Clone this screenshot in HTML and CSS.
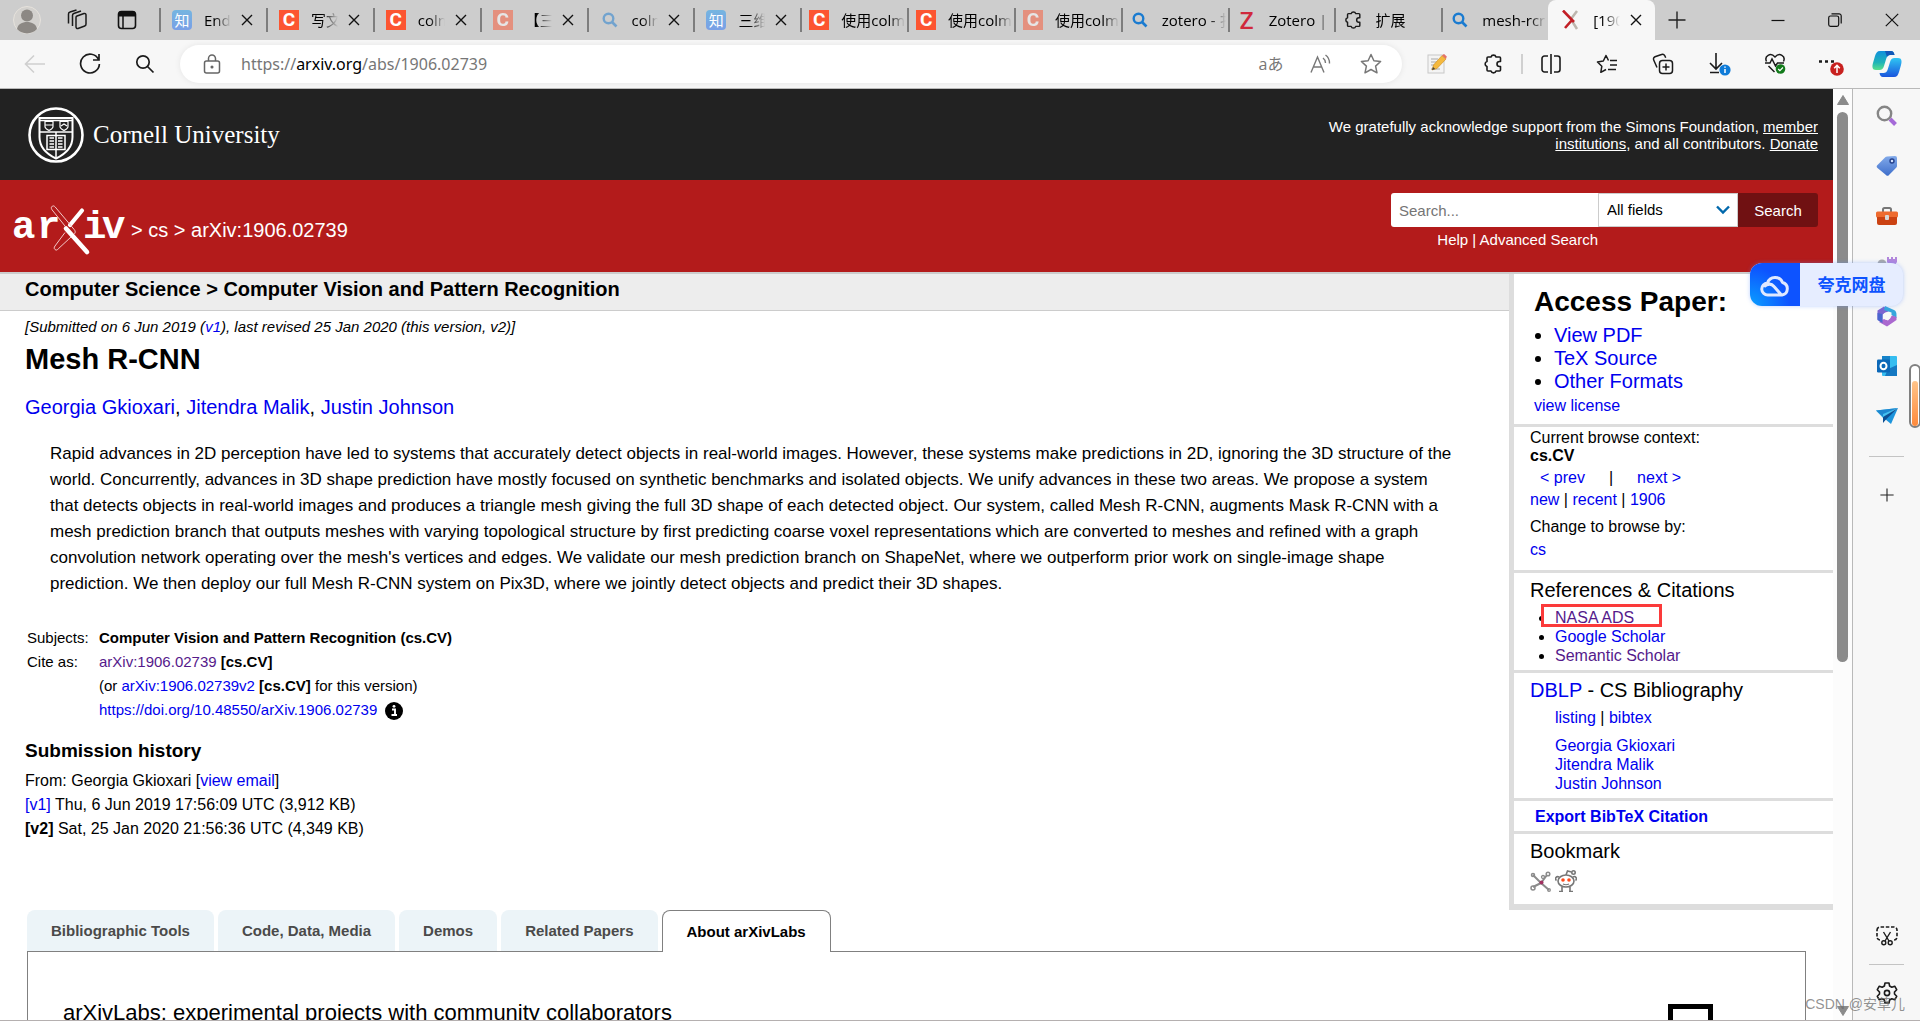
FILE: index.html
```html
<!DOCTYPE html>
<html lang="en">
  <head>
    <meta charset="UTF-8" />
    <meta name="viewport" content="width=device-width, initial-scale=1.0" />
    <title>[1906.02739] Mesh R-CNN</title>
    <link rel="stylesheet" href="styles.css">
  </head>
  <body>
    <!-- shared icons -->
    <svg class="defs" aria-hidden="true">
      <symbol id="i-close" viewBox="0 0 12 12"><path d="M1 1l10 10M11 1L1 11" stroke="#111" stroke-width="1.4" /></symbol>
      <symbol id="i-find" viewBox="0 0 20 20"><circle cx="8.5" cy="8.5" r="4.8" fill="none" stroke="#1a7bd0" stroke-width="2.4" /><path d="M12 12l4.5 4.5" stroke="#1a7bd0" stroke-width="2.6" /></symbol>
      <symbol id="i-ext" viewBox="0 0 22 22"><path d="M6 4h3a2.6 2.6 0 0 1 5 0h3.500a1 1 0 0 1 1 1v3.500h-1a2.500 2.500 0 0 0 0 5h1V17a1 1 0 0 1-1 1H14a2.600 2.600 0 0 1-5 0H6a1 1 0 0 1-1-1v-3.500a2.600 2.600 0 0 1 0-5V5a1 1 0 0 1 1-1z" fill="none" stroke="#1b1b1b" stroke-width="1.6" stroke-linejoin="round" /></symbol>
      <symbol id="i-plus" viewBox="0 0 18 18"><path d="M9 0.500v17M0.500 9h17" stroke="#222" stroke-width="1.4" /></symbol>
    </svg>

    <!-- Tab strip -->
    <div class="tabstrip">
      <div class="strip-left">
        <button class="strip-btn" aria-label="Profile">
          <svg width="28" height="28" viewBox="0 0 28 28"><circle cx="14" cy="14" r="13.500" fill="#d3d1ce" stroke="#e6e2dc" /><circle cx="14" cy="9.500" r="6" fill="#8c8884" /><path d="M4 23c1-5 5-7 10-7s9 2 10 7a13.500 13.500 0 0 1-20 0z" fill="#8c8884" /></svg>
        </button>
        <button class="strip-btn" aria-label="Workspaces">
          <svg width="24" height="22" viewBox="0 0 24 22" fill="none" stroke="#1b1b1b" stroke-width="1.500" stroke-linejoin="round"><path d="M12 7l7-2.500a1.500 1.500 0 0 1 2 1.300V15a2 2 0 0 1-1.300 2L13 19.500a1.500 1.500 0 0 1-2-1.400V8.500A1.600 1.600 0 0 1 12 7zM7.500 17V6.500a2 2 0 0 1 1.300-2L16 2M3.500 14.500V5A2 2 0 0 1 5 3l6.500-2" /></svg>
        </button>
        <button class="strip-btn" aria-label="Tab actions">
          <svg width="20" height="20" viewBox="0 0 20 20"><rect x="1.500" y="1.500" width="17" height="17" rx="3" fill="none" stroke="#111" stroke-width="1.600" /><path d="M1.500 6.500V4a3 3 0 0 1 3-3h11a3 3 0 0 1 3 3v2.500z" fill="#111" /><path d="M6 6v12" stroke="#111" stroke-width="1.500" /></svg>
        </button>
      </div>
      <div class="tabs">
        <div class="tab"><span class="fav zhihu">知</span><span class="tab-title">End</span><button class="tab-x" aria-label="Close"><svg width="12" height="12"><use href="#i-close" /></svg></button></div>
        <div class="tab"><span class="fav csdn">C</span><span class="tab-title">写文</span><button class="tab-x" aria-label="Close"><svg width="12" height="12"><use href="#i-close" /></svg></button></div>
        <div class="tab"><span class="fav csdn">C</span><span class="tab-title">coln</span><button class="tab-x" aria-label="Close"><svg width="12" height="12"><use href="#i-close" /></svg></button></div>
        <div class="tab"><span class="fav csdn asleep">C</span><span class="tab-title">【三</span><button class="tab-x" aria-label="Close"><svg width="12" height="12"><use href="#i-close" /></svg></button></div>
        <div class="tab"><svg class="fav asleep" viewBox="0 0 20 20"><use href="#i-find" /></svg><span class="tab-title">coln</span><button class="tab-x" aria-label="Close"><svg width="12" height="12"><use href="#i-close" /></svg></button></div>
        <div class="tab"><span class="fav zhihu">知</span><span class="tab-title">三维</span><button class="tab-x" aria-label="Close"><svg width="12" height="12"><use href="#i-close" /></svg></button></div>
        <div class="tab wide"><span class="fav csdn">C</span><span class="tab-title">使用colm</span></div>
        <div class="tab wide"><span class="fav csdn">C</span><span class="tab-title">使用colm</span></div>
        <div class="tab wide"><span class="fav csdn asleep">C</span><span class="tab-title">使用colm</span></div>
        <div class="tab wide"><svg class="fav" viewBox="0 0 20 20"><use href="#i-find" /></svg><span class="tab-title">zotero - 扌</span></div>
        <div class="tab wide"><span class="fav zot">Z</span><span class="tab-title">Zotero |</span></div>
        <div class="tab wide"><svg class="fav" viewBox="0 0 22 22"><use href="#i-ext" /></svg><span class="tab-title">扩展</span></div>
        <div class="tab wide"><svg class="fav" viewBox="0 0 20 20"><use href="#i-find" /></svg><span class="tab-title">mesh-rcr</span></div>
        <div class="tab active"><svg class="fav" viewBox="0 0 20 20"><path d="M16 1L10 9M11 11l5 8" stroke="#bdb6ae" stroke-width="2.500" /><path d="M2 0.500L13 12M4 18l7-8" stroke="#c21f26" stroke-width="2.600" /></svg><span class="tab-title">[190</span><button class="tab-x" aria-label="Close"><svg width="12" height="12"><use href="#i-close" /></svg></button></div>
      </div>
      <button class="new-tab" aria-label="New tab"><svg width="18" height="18"><use href="#i-plus" /></svg></button>
      <div class="win-btns">
        <button aria-label="Minimize"><svg width="14" height="14" viewBox="0 0 14 14"><path d="M0.500 7.500h13" stroke="#111" stroke-width="1.200" /></svg></button>
        <button aria-label="Restore"><svg width="14" height="14" viewBox="0 0 14 14" fill="none" stroke="#111" stroke-width="1.200"><rect x="0.700" y="3" width="10" height="10.300" rx="1.800" /><path d="M3.500 0.800H11a2.200 2.200 0 0 1 2.200 2.200v7.500" /></svg></button>
        <button aria-label="Close window"><svg width="14" height="14" viewBox="0 0 14 14"><path d="M0.800 0.800l12.400 12.400M13.200 0.800L0.800 13.200" stroke="#111" stroke-width="1.200" /></svg></button>
      </div>
    </div>

    <!-- Toolbar -->
    <div class="toolbar">
      <div class="nav-btns">
        <button aria-label="Back" disabled><svg width="22" height="20" viewBox="0 0 22 20" fill="none" stroke="#cfcfcf" stroke-width="1.600"><path d="M21 10H2M10 1.500L1.500 10l8.500 8.500" /></svg></button>
        <button aria-label="Refresh"><svg width="22" height="22" viewBox="0 0 22 22" fill="none" stroke="#1b1b1b" stroke-width="1.700"><path d="M19.500 6.500A9.400 9.400 0 1 0 20.400 11M20 1v6h-6" /></svg></button>
        <button aria-label="Search"><svg width="20" height="20" viewBox="0 0 20 20" fill="none" stroke="#1b1b1b" stroke-width="1.700"><circle cx="8" cy="8" r="6.200" /><path d="M12.500 12.500l6 6" /></svg></button>
      </div>
      <div class="address">
        <svg class="lock" width="18" height="20" viewBox="0 0 18 20" fill="none" stroke="#666" stroke-width="1.500"><rect x="1.500" y="7" width="15" height="12" rx="2" /><path d="M5.500 7V4.500a3.500 3.500 0 0 1 7 0V7" /><circle cx="9" cy="13" r="0.800" fill="#666" /></svg>
        <div class="url">https://<b>arxiv.org</b>/abs/1906.02739</div>
        <button class="translate" aria-label="Translate">aあ</button>
        <button aria-label="Read aloud"><svg width="22" height="20" viewBox="0 0 22 20" fill="none" stroke="#777" stroke-width="1.400"><path d="M1 18.500L7.500 3 14 18.500M3.500 13h8M13 4a6 6 0 0 1 2.500 5M15.500 1a10 10 0 0 1 4 8.500" /></svg></button>
        <button aria-label="Favorite"><svg width="22" height="22" viewBox="0 0 22 22" fill="none" stroke="#777" stroke-width="1.500" stroke-linejoin="round"><path d="M11 1.500l2.900 6.200 6.700.8-5 4.600 1.400 6.700-6-3.300-6 3.300 1.400-6.700-5-4.600 6.700-.8z" /></svg></button>
      </div>
      <div class="tool-btns">
        <button aria-label="Notes"><svg width="20" height="22" viewBox="0 0 20 22"><rect x="1" y="2" width="16" height="18" fill="#f4f4f4" stroke="#c8c8c8" /><path d="M4 6h7M4 9h6M4 12h4M4 16h9" stroke="#a9a9a9" /><path d="M5 17l1.500-5L15 2.500l4 3.500L10 15.500z" fill="#f5b93e" stroke="#c98a1d" stroke-width="0.600" /><path d="M15 2.500l2-1.500 2.800 2.600L19 6z" fill="#e57368" /><path d="M5 17l1-3 2.200 1.900z" fill="#444" /></svg></button>
        <button aria-label="Extensions"><svg width="22" height="22"><use href="#i-ext" /></svg></button>
        <span class="tool-sep"></span>
        <button aria-label="Split screen"><svg width="20" height="20" viewBox="0 0 20 20" fill="none" stroke="#1b1b1b" stroke-width="1.600"><path d="M7 2H3.500a2.500 2.500 0 0 0-2.500 2.500v11A2.500 2.500 0 0 0 3.500 18H7M13 2h3.500A2.500 2.500 0 0 1 19 4.500v11a2.500 2.500 0 0 1-2.500 2.500H13M10 0v20" /></svg></button>
        <button aria-label="Favorites"><svg width="22" height="20" viewBox="0 0 22 20" fill="none" stroke="#1b1b1b" stroke-width="1.500" stroke-linejoin="round"><path d="M12.500 6.500L10 1.500 7.300 7 1.500 8l4.300 4.300-1 6L10 15.500M14 6.500h7M14 11h7M12 15.500h8" /></svg></button>
        <button aria-label="Collections"><svg width="22" height="22" viewBox="0 0 22 22" fill="none" stroke="#1b1b1b" stroke-width="1.500"><rect x="7.500" y="7.500" width="13" height="13" rx="3" /><path d="M14 10.500v7M10.500 14h7M5 14.500L1.700 7A2.500 2.500 0 0 1 3 3.700L9.500 1.500a2.500 2.500 0 0 1 3.300 1.300l.9 2" /></svg></button>
        <button aria-label="Downloads"><svg width="24" height="24" viewBox="0 0 24 24"><path d="M9 1v16M3 11l6 6 6-6M3 20.500h9" fill="none" stroke="#1b1b1b" stroke-width="1.600" /><circle cx="18" cy="18" r="5.600" fill="#0f7bd8" /><path d="M18 17v4M18 14.500v1.300" stroke="#fff" stroke-width="1.500" /></svg></button>
        <button aria-label="Browser essentials"><svg width="24" height="24" viewBox="0 0 24 24"><path d="M3.500 9.500C1 4 7.500 0 12 5c4.500-5 11-1 8.500 4.500M5.500 14l6 6M2 11h5l2-4 3.500 7 2-3h6.500" fill="none" stroke="#1b1b1b" stroke-width="1.500" /><circle cx="17.500" cy="17" r="4.800" fill="#127a1b" /><path d="M15.200 17l1.700 1.700 3-3.200" fill="none" stroke="#fff" stroke-width="1.200" /></svg></button>
        <button aria-label="Settings and more"><svg width="26" height="26" viewBox="0 0 26 26"><path d="M1 10.500h3M7 10.500h3M13 10.500h3" stroke="#1b1b1b" stroke-width="2.600" /><circle cx="19" cy="18" r="6.800" fill="#c8211f" /><path d="M19 22v-7M16.200 17.200l2.800-2.800 2.800 2.800" fill="none" stroke="#fff" stroke-width="1.500" /></svg></button>
        <button aria-label="Copilot">
          <svg width="30" height="28" viewBox="0 0 30 28">
            <defs>
              <linearGradient id="cp1" x1="0" y1="0" x2="0" y2="1"><stop offset="0" stop-color="#1190dc" /><stop offset="0.600" stop-color="#1fb3b8" /><stop offset="1" stop-color="#5be08a" /></linearGradient>
              <linearGradient id="cp2" x1="0" y1="0" x2="0" y2="1"><stop offset="0" stop-color="#2fc6f3" /><stop offset="1" stop-color="#1a54dd" /></linearGradient>
            </defs>
            <path d="M8 1h11c2 0 3 1.500 3.500 4h-4c-2 0-3.500 1-4.200 3.500L12 16c-.8 2.500-2 4-4.500 4H4c-4 0-4-3.500-3-7l2-7c1-3 2-5 5-5z" fill="url(#cp1)" />
            <path d="M22 27H11c-2 0-3-1.500-3.500-4h4c2 0 3.500-1 4.200-3.500L18 12c.8-2.500 2-4 4.500-4H26c4 0 4 3.500 3 7l-2 7c-1 3-2 5-5 5z" fill="url(#cp2)" />
            <path d="M13 1h6c2 0 3 1.500 3.500 4h-4c-1.500 0-2.700.6-3.500 2z" fill="#1358b8" />
          </svg>
        </button>
      </div>
    </div>

    <div class="viewport">
      <main class="page">
        <header class="cornell">
          <a class="cornell-logo" href="#">
            <svg width="56" height="56" viewBox="0 0 56 56" fill="none" stroke="#fff">
              <circle cx="28" cy="28" r="26.500" stroke-width="2.600" />
              <path d="M11.500 11h33v19c0 11-7 17-16.500 21.500C18.500 47 11.500 41 11.500 30z" stroke-width="2" />
              <path d="M11.500 25h33M28 25v25M11 13.500h34" stroke-width="1.500" />
              <path d="M17 14.500h8v5c0 2-2 3-4 4-2-1-4-2-4-4zM32 14.500h8v5c0 2-2 3-4 4-2-1-4-2-4-4zM17 18h8M33 19l3-2 3 2" stroke-width="1.200" />
              <path d="M19 28.500h18v14H19z" stroke-width="1.500" />
              <path d="M21.500 31h4.500M21.500 34h4.500M21.500 37h4.500M21.500 40h4.500M30 31h4.500M30 34h4.500M30 37h4.500M30 40h4.500" stroke-width="1.300" />
            </svg>
            <span>Cornell University</span>
          </a>
          <p class="support">We gratefully acknowledge support from the Simons Foundation, <a href="#">member institutions</a>, and all contributors. <a href="#">Donate</a></p>
        </header>

        <div class="arxiv-bar">
          <div class="crumbs">
            <a href="#" aria-label="arXiv">
              <svg class="arxiv-logo" width="114" height="52" viewBox="0 0 114 52">
                <g class="logo-text"><text x="0" y="34">a</text><text x="25" y="34">r</text><text x="71" y="34">i</text><text x="90" y="34">v</text></g>
                <path d="M58 21L70 6.500M67 21" stroke="#fff" stroke-width="4.200" stroke-linecap="round" />
                <path d="M54 24.500L75 48" stroke="#fff" stroke-width="4.600" stroke-linecap="round" />
                <path d="M39.500 3c1-1.500 2.500-1.500 3.700 0l19 22.500c1.300 1.600 1.300 3 .3 4.300M39.500 3c-.5 1 0 2 .7 3L53 22M53 28.500L43 42c-1 1.500-1.200 2.500 0 3.500s2.200.6 3.200-.6L59 33" fill="none" stroke="#f3c9c9" stroke-width="1" />
              </svg>
            </a>
            <span>&gt; <a href="#">cs</a> &gt; arXiv:1906.02739</span>
          </div>
          <form class="search">
            <div class="search-row">
              <input type="text" placeholder="Search..." aria-label="Search term" />
              <div class="select-wrap">
                <select aria-label="Field to search">
                  <option>All fields</option>
                  <option>Title</option>
                  <option>Author</option>
                </select>
                <svg width="14" height="10" viewBox="0 0 14 10"><path d="M1 1.500l6 6 6-6" fill="none" stroke="#0068ac" stroke-width="2.400" /></svg>
              </div>
              <button type="button">Search</button>
            </div>
            <p><a href="#">Help</a> | <a href="#">Advanced Search</a></p>
          </form>
        </div>

        <div class="columns">
          <article>
            <h1 class="subject">Computer Science &gt; Computer Vision and Pattern Recognition</h1>
            <div class="paper">
              <p class="dateline">[Submitted on 6 Jun 2019 (<a href="#">v1</a>), last revised 25 Jan 2020 (this version, v2)]</p>
              <h2 class="title">Mesh R-CNN</h2>
              <p class="authors"><a href="#">Georgia Gkioxari</a>, <a href="#">Jitendra Malik</a>, <a href="#">Justin Johnson</a></p>
              <blockquote>Rapid advances in 2D perception have led to systems that accurately detect objects in real-world images. However, these systems make predictions in 2D, ignoring the 3D structure of the world. Concurrently, advances in 3D shape prediction have mostly focused on synthetic benchmarks and isolated objects. We unify advances in these two areas. We propose a system that detects objects in real-world images and produces a triangle mesh giving the full 3D shape of each detected object. Our system, called Mesh R-CNN, augments Mask R-CNN with a mesh prediction branch that outputs meshes with varying topological structure by first predicting coarse voxel representations which are converted to meshes and refined with a graph convolution network operating over the mesh's vertices and edges. We validate our mesh prediction branch on ShapeNet, where we outperform prior work on single-image shape prediction. We then deploy our full Mesh R-CNN system on Pix3D, where we jointly detect objects and predict their 3D shapes.</blockquote>
              <table>
                <tr><td>Subjects:</td><td><b>Computer Vision and Pattern Recognition (cs.CV)</b></td></tr>
                <tr><td>Cite as:</td><td><a class="visited" href="#">arXiv:1906.02739</a> <b>[cs.CV]</b></td></tr>
                <tr><td></td><td>(or <a href="#">arXiv:1906.02739v2</a> <b>[cs.CV]</b> for this version)</td></tr>
                <tr><td></td><td><a href="#">https://doi.org/10.48550/arXiv.1906.02739</a> <svg class="info" width="18" height="18" viewBox="0 0 18 18"><circle cx="9" cy="9" r="9" fill="#000" /><path d="M7 7.500h3v5M6.500 13h5.500" fill="none" stroke="#fff" stroke-width="1.900" /><circle cx="9" cy="4.300" r="1.400" fill="#fff" /></svg></td></tr>
              </table>
              <h3>Submission history</h3>
              <p class="history">From: Georgia Gkioxari [<a href="#">view email</a>]</p>
              <p class="history"><a href="#">[v1]</a> Thu, 6 Jun 2019 17:56:09 UTC (3,912 KB)</p>
              <p class="history"><b>[v2]</b> Sat, 25 Jan 2020 21:56:36 UTC (4,349 KB)</p>
            </div>
          </article>

          <aside class="extra">
            <section class="access">
              <h2>Access Paper:</h2>
              <ul>
                <li><a href="#">View PDF</a></li>
                <li><a href="#">TeX Source</a></li>
                <li><a href="#">Other Formats</a></li>
              </ul>
              <a class="license" href="#">view license</a>
            </section>
            <section class="context">
              <p>Current browse context:</p>
              <p><b>cs.CV</b></p>
              <div class="prevnext"><a href="#">&lt; prev</a><span>|</span><a href="#">next &gt;</a></div>
              <p class="list"><a href="#">new</a> | <a href="#">recent</a> | <a href="#">1906</a></p>
              <p class="change">Change to browse by:</p>
              <p class="list"><a href="#">cs</a></p>
            </section>
            <section class="refs">
              <h3>References &amp; Citations</h3>
              <ul>
                <li class="marked"><a class="visited" href="#">NASA ADS</a></li>
                <li><a href="#">Google Scholar</a></li>
                <li><a class="visited" href="#">Semantic Scholar</a></li>
              </ul>
            </section>
            <section class="dblp">
              <h3><a href="#">DBLP</a> - CS Bibliography</h3>
              <div class="listing"><a href="#">listing</a> | <a href="#">bibtex</a></div>
              <div class="people"><a href="#">Georgia Gkioxari</a><a href="#">Jitendra Malik</a><a href="#">Justin Johnson</a></div>
            </section>
            <section class="export"><a href="#">Export BibTeX Citation</a></section>
            <section class="bookmark">
              <h3>Bookmark</h3>
              <div class="bookmark-icons">
                <a href="#" aria-label="BibSonomy"><svg width="22" height="22" viewBox="0 0 22 22" fill="none" stroke="#8b8b8b" stroke-width="2"><path d="M3 5l8 8 6-8M11 13l8 7M11 13l-8 4" /><circle cx="3" cy="5" r="1.500" stroke-width="1.500" /><circle cx="18" cy="4" r="1.800" stroke-width="1.500" /><circle cx="13" cy="7" r="1.500" stroke-width="1.300" /><circle cx="19" cy="20" r="1.300" stroke-width="1.300" /><circle cx="3" cy="18" r="2" stroke-width="1.500" /><circle cx="11.500" cy="12.500" r="2" fill="#a03060" stroke="none" /></svg></a>
                <a href="#" aria-label="Reddit"><svg width="22" height="22" viewBox="0 0 22 22" fill="none" stroke="#777" stroke-width="1.600"><path d="M11 5l1.500-4 4 1" /><circle cx="18.500" cy="2.500" r="1.700" /><ellipse cx="11" cy="11" rx="8" ry="6" fill="#fff" /><path d="M4 7a2 2 0 0 0-2.500 3.500M18 7a2 2 0 0 1 2.500 3.500M7 17v4M15 17v4M4 21.500h4M14 21.500h4" /><circle cx="8" cy="10" r="1.800" fill="#ff4a1c" stroke="none" /><circle cx="14" cy="10" r="1.800" fill="#ff4a1c" stroke="none" /><path d="M8 14q3 1.500 6 0" stroke-width="1.200" /></svg></a>
              </div>
            </section>
          </aside>
        </div>

        <div class="labs">
          <div class="labs-tabs" role="tablist">
            <button role="tab">Bibliographic Tools</button>
            <button role="tab">Code, Data, Media</button>
            <button role="tab">Demos</button>
            <button role="tab">Related Papers</button>
            <button role="tab" class="current" aria-selected="true">About arXivLabs</button>
          </div>
          <div class="labs-panel">
            <h2>arXivLabs: experimental projects with community collaborators</h2>
            <div class="flask"></div>
          </div>
        </div>
      </main>

      <div class="scrollbar">
        <svg width="12" height="10" viewBox="0 0 12 10"><path d="M6 0.500L11.500 9.500H0.500z" fill="#8b8b8b" stroke="#8b8b8b" stroke-linejoin="round" /></svg>
        <div class="track"><div class="thumb"></div></div>
        <svg width="12" height="10" viewBox="0 0 12 10"><path d="M6 9.500L11.500 0.500H0.500z" fill="#8b8b8b" stroke="#8b8b8b" stroke-linejoin="round" /></svg>
      </div>

      <nav class="sidebar">
        <button aria-label="Search"><svg width="22" height="22" viewBox="0 0 22 22" fill="none"><path d="M14 14l5.500 5.500" stroke="#a56ad8" stroke-width="4" /><circle cx="8.500" cy="8.500" r="6.700" stroke="#858585" stroke-width="2.400" /></svg></button>
        <button aria-label="Shopping"><svg width="22" height="22" viewBox="0 0 22 22"><defs><linearGradient id="tg" x1="0" y1="0" x2="0" y2="1"><stop offset="0" stop-color="#82aaea" /><stop offset="1" stop-color="#3f6fcb" /></linearGradient></defs><path d="M11 1.500l8-.5a2 2 0 0 1 2 2v8a2 2 0 0 1-.6 1.500l-7.400 7.500a2 2 0 0 1-3 0L1.500 13a2 2 0 0 1 0-3l8-8z" fill="url(#tg)" /><circle cx="16" cy="6" r="2" fill="#cfe0ff" stroke="#24408c" stroke-width="1.400" /></svg></button>
        <button aria-label="Tools"><svg width="24" height="20" viewBox="0 0 24 20"><path d="M8 6V3.500A1.500 1.500 0 0 1 9.500 2h5A1.500 1.500 0 0 1 16 3.500V6" fill="none" stroke="#777" stroke-width="2" /><rect x="1" y="5.500" width="22" height="6" rx="1.500" fill="#ee6b2f" /><path d="M2 11h20v6a2 2 0 0 1-2 2H4a2 2 0 0 1-2-2z" fill="#cb4212" /><rect x="10" y="9" width="4" height="5" rx="1" fill="#d7d7d7" /></svg></button>
        <button aria-label="Games"><svg width="22" height="22" viewBox="0 0 22 22"><circle cx="6" cy="9" r="4.500" fill="#a9a9a9" /><path d="M2 20c0-5 2-7 4-7s4 2 4 7z" fill="#a9a9a9" /><path d="M11 2h2v2h2V2h2v2h2V2h2v5l-2 3v10h-6V10l-2-3z" fill="#b286dc" /></svg></button>
        <button aria-label="Microsoft 365"><svg width="22" height="22" viewBox="0 0 22 22"><path d="M8 1.500L1.500 5.500v9l5 4V9.500L13 6z" fill="#7c65d0" /><path d="M9 1l9 4c2 1 2.500 2.500 2.500 5V13l-5-3V7.500L8 5z" fill="#36a6dc" /><path d="M20.500 12v3L11 21.500 3 17l5-3 4 1.500 4-5z" fill="#aa68cf" /><path d="M1.500 8v7l5 3V9z" fill="#4a66cf" /><circle cx="11" cy="11" r="3.800" fill="#f7f7f7" /></svg></button>
        <button aria-label="Outlook"><svg width="22" height="22" viewBox="0 0 22 22"><rect x="6" y="1" width="15" height="20" rx="1" fill="#35bdf0" /><path d="M6 1h8v8H6z" fill="#1683c9" /><path d="M12 14l9-4v11H9z" fill="#1478c2" /><rect x="1" y="4.500" width="13" height="13" rx="1.200" fill="#0b68b8" /><ellipse cx="7.500" cy="11" rx="3" ry="3.300" fill="none" stroke="#fff" stroke-width="2" /></svg></button>
        <button aria-label="Drop"><svg width="24" height="20" viewBox="0 0 24 20"><path d="M1 4.500L23 2 8 12z" fill="#45c1f0" /><path d="M23 2l-7 16-6-5z" fill="#1c94dc" /><path d="M23 2L8 11v6l3-3.500z" fill="#0d4f93" /><path d="M1 4.500l7 6.500v-3L23 2z" fill="#1e86cf" /></svg></button>
        <hr />
        <button class="add" aria-label="Customize"><svg width="14" height="14" viewBox="0 0 18 18"><use href="#i-plus" /></svg></button>
        <span class="grow"></span>
        <button class="foot" aria-label="Screenshot"><svg width="22" height="20" viewBox="0 0 22 20" fill="none" stroke="#1b1b1b" stroke-width="1.600"><path d="M1 4a3 3 0 0 1 3-3h14a3 3 0 0 1 3 3v7a3 3 0 0 1-3 3M4 14a3 3 0 0 1-3-3V4" stroke-dasharray="3.500 1.700" /><path d="M7.500 6l5.500 9M14.500 6L9 15" stroke-width="1.400" /><circle cx="7.800" cy="16.800" r="2" stroke-width="1.400" /><circle cx="14.200" cy="16.800" r="2" stroke-width="1.400" /></svg></button>
        <hr />
        <button class="foot" aria-label="Settings"><svg width="22" height="22" viewBox="0 0 22 22" fill="none" stroke="#1b1b1b" stroke-width="1.600" stroke-linejoin="round"><path d="M9 1h4l.6 3 2.200 1.200 2.900-1 2 3.500L18.500 10v2l2.200 2.300-2 3.500-2.900-1L13.600 18l-.6 3H9l-.6-3-2.200-1.200-2.900 1-2-3.500L3.500 12v-2L1.300 7.700l2-3.500 2.900 1L8.400 4z" /><circle cx="11" cy="11" r="2.600" /></svg></button>
      </nav>
    </div>

    <!-- floating widgets -->
    <a class="quark" href="#">
      <span class="quark-icon"><svg width="30" height="26" viewBox="0 0 30 26" fill="none" stroke="#dfe9ff" stroke-width="3"><path d="M8 23a6 6 0 0 1-.5-12A8 8 0 0 1 22.500 10.500 6.400 6.400 0 0 1 22 23zM4 14.500c5-4 8-2.500 10 0l7 8" stroke-linejoin="round" /></svg></span>
      <span class="quark-label">夸克网盘</span>
    </a>
    <div class="capsule"><div class="capsule-fill"></div></div>
    <div class="watermark">CSDN @安草儿</div>
  </body>
</html>
```

FILE: styles.css
```css
*,
*::before,
*::after {
  box-sizing: border-box;
}

body {
  margin: 0;
  height: 100vh;
  display: flex;
  flex-direction: column;
  overflow: hidden;
  position: relative;
  font-family: "Liberation Sans", Arial, sans-serif;
  font-size: 16px;
  color: #000;
  background: #fff;
  border-bottom: 1px solid #b5b0b0;
}

h1, h2, h3, p, ul, blockquote {
  margin: 0;
  padding: 0;
}

a {
  color: #0000ee;
  text-decoration: none;
}

a.visited {
  color: #551a8b;
}

button {
  border: none;
  background: none;
  padding: 0;
  font-family: inherit;
}

svg {
  display: block;
}

.defs {
  display: none;
}

/* tab strip */
.tabstrip {
  display: flex;
  flex: none;
  height: 40px;
  background: #cdcdcd;
  font-family: "Open Sans", "Noto Sans CJK SC", sans-serif;
  font-size: 15px;
}

.strip-left {
  display: flex;
  width: 159px;
  padding-left: 2px;
}

.strip-btn {
  width: 50px;
  display: flex;
  align-items: center;
  justify-content: center;
}

.tabs {
  display: flex;
  flex: 0 1 1496px;
  min-width: 0;
}

.tab {
  flex: 1 1 107px;
  min-width: 0;
  display: flex;
  align-items: center;
  padding: 0 13px 0 13px;
  background: linear-gradient(#7d7d7d, #7d7d7d) left center / 2px 24px no-repeat;
}

.tab.wide {
  padding: 0 2px 0 9px;
}

.fav {
  flex: none;
  width: 20px;
  height: 20px;
  margin-right: 12px;
}

.zhihu {
  border-radius: 4px;
  background: linear-gradient(#75b5e0, #799fe6);
  color: #fff;
  font-size: 15px;
  line-height: 20px;
  text-align: center;
}

.csdn {
  background: #fc5531;
  color: #fff;
  font-family: Roboto, sans-serif;
  font-weight: 700;
  font-size: 19px;
  line-height: 20px;
  text-align: center;
}

.zot {
  color: #d0293c;
  font-weight: 600;
  font-size: 24px;
  line-height: 20px;
  text-align: center;
}

.asleep {
  opacity: 0.5;
}

.tab-title {
  flex: 1;
  min-width: 0;
  overflow: hidden;
  white-space: nowrap;
  line-height: 24px;
  -webkit-mask-image: linear-gradient(to left, transparent, #000 16px);
  mask-image: linear-gradient(to left, transparent, #000 16px);
}

.tab-x {
  flex: none;
  margin-left: 10px;
}

.tab.active {
  background: #f7f7f7;
  border-radius: 8px 8px 0 0;
}

.new-tab {
  width: 44px;
  display: flex;
  align-items: center;
  justify-content: center;
}

.win-btns {
  display: flex;
  margin-left: auto;
}

.win-btns button {
  width: 57px;
  display: flex;
  align-items: center;
  justify-content: center;
}

/* toolbar */
.toolbar {
  display: flex;
  flex: none;
  align-items: center;
  height: 49px;
  padding-right: 5px;
  background: #f7f7f7;
  border-bottom: 1px solid #b9b9b9;
}

.nav-btns {
  display: flex;
  width: 180px;
  padding-left: 7px;
}

.nav-btns button {
  width: 55px;
  height: 40px;
  display: flex;
  align-items: center;
  justify-content: center;
}

.address {
  flex: 1;
  display: flex;
  align-items: center;
  height: 38px;
  padding: 0 6px 0 23px;
  background: #fff;
  border-radius: 19px;
  box-shadow: 0 0 6px rgba(0, 0, 0, 0.08);
}

.url {
  flex: 1;
  margin-left: 20px;
  color: #767676;
  font-family: "Noto Sans", sans-serif;
  font-size: 16px;
}

.url b {
  color: #000;
  font-weight: 400;
}

.address button {
  width: 50px;
  display: flex;
  justify-content: center;
}

.translate {
  color: #777;
  font-family: "Open Sans", "Noto Sans CJK JP", sans-serif;
  font-size: 16px;
  line-height: 20px;
}

.tool-btns {
  display: flex;
  align-items: center;
  margin-left: 7px;
}

.tool-btns button {
  width: 56px;
  height: 40px;
  display: flex;
  align-items: center;
  justify-content: center;
}

.tool-sep {
  width: 2px;
  height: 20px;
  background: #d0d0d0;
}

/* page area */
.viewport {
  flex: 1;
  min-height: 0;
  display: flex;
}

.page {
  flex: 1;
  min-width: 0;
  overflow: hidden;
}

.cornell {
  display: flex;
  align-items: center;
  justify-content: space-between;
  height: 91px;
  padding: 0 15px 0 28px;
  background: #222;
  color: #fff;
}

.cornell-logo {
  display: flex;
  align-items: center;
  gap: 9px;
  color: #fff;
  font-family: "Liberation Serif", serif;
  font-size: 25px;
}

.support {
  width: 500px;
  font-size: 15px;
  line-height: 17px;
  text-align: right;
}

.support a {
  color: #fff;
  text-decoration: underline;
}

.arxiv-bar {
  display: flex;
  justify-content: space-between;
  height: 94px;
  padding: 13px 15px 0 12px;
  background: #b31b1b;
  border-bottom: 2px solid #ccc;
  color: #fff;
}

.arxiv-bar a {
  color: #fff;
}

.crumbs {
  display: flex;
  align-items: center;
  gap: 5px;
  height: 74px;
  font-size: 20px;
}

.logo-text {
  fill: #fff;
  font-family: "Liberation Mono", monospace;
  font-weight: 700;
  font-size: 39px;
}

.search-row {
  display: flex;
  height: 34px;
}

.search-row input {
  width: 207px;
  padding: 0 8px;
  border: none;
  border-radius: 3px 0 0 3px;
  font-family: inherit;
  font-size: 15px;
}

.search-row input::placeholder {
  color: #757575;
}

.select-wrap {
  position: relative;
}

.select-wrap select {
  width: 140px;
  height: 34px;
  padding: 0 8px 2px;
  border: 1px solid #ccc;
  border-radius: 0;
  background: #fff;
  color: #000;
  font-family: inherit;
  font-size: 15px;
  appearance: none;
}

.select-wrap svg {
  position: absolute;
  right: 8px;
  top: 12px;
}

.search-row button {
  width: 80px;
  border-radius: 0 3px 3px 0;
  background: #701112;
  color: #fff;
  font-size: 15px;
}

.search p {
  width: 207px;
  padding-top: 4px;
  font-size: 15px;
  line-height: 18px;
  text-align: right;
}

.columns {
  display: flex;
}

article {
  flex: 1;
  min-width: 0;
}

.subject {
  padding: 4px 25px 9px;
  background: #ededed;
  border-bottom: 1px solid #ccc;
  font-size: 20px;
  line-height: 23px;
}

.paper {
  padding: 7px 25px 0;
}

.dateline {
  font-size: 15px;
  font-style: italic;
  line-height: 18px;
}

.title {
  margin-top: 6px;
  font-size: 29px;
  line-height: 34px;
}

.authors {
  margin-top: 19px;
  font-size: 20px;
  line-height: 24px;
}

.paper blockquote {
  margin: 22px 25px 29px;
  font-size: 17px;
  line-height: 26px;
}

.paper table {
  border-collapse: collapse;
  font-size: 15px;
  line-height: 24px;
}

.paper td {
  height: 24px;
  padding: 0 0 0 2px;
}

.paper td:first-child {
  width: 72px;
}

.info {
  display: inline-block;
  margin-left: 4px;
  vertical-align: middle;
}

.paper h3 {
  margin: 18px 0 7px;
  font-size: 19px;
  line-height: 22px;
}

.history {
  line-height: 24px;
}

/* right column */
.extra {
  width: 324px;
  border-left: 5px solid #ddd;
  border-bottom: 3px solid #ddd;
}

.extra section {
  padding: 5px 16px 5px;
  border-bottom: 3px solid #ddd;
}

.extra h3 {
  font-size: 20px;
  font-weight: 400;
  line-height: 24px;
}

.extra .access {
  padding: 13px 20px 9px;
}

.access h2 {
  font-size: 28px;
  line-height: 30px;
}

.access ul {
  margin: 7px 0 4px;
  padding-left: 20px;
  font-size: 20px;
  line-height: 23px;
}

.license {
  display: block;
  line-height: 18px;
}

.extra .context {
  padding: 2px 16px 9px;
  line-height: 18px;
}

.prevnext {
  display: flex;
  gap: 24px;
  padding: 2px 10px 0;
  line-height: 22px;
}

.context .list {
  line-height: 22px;
}

.context .change {
  margin: 5px 0 1px;
  line-height: 22px;
}

.refs ul {
  margin-top: 6px;
  padding-left: 25px;
  line-height: 19px;
}

.marked {
  position: relative;
}

/* highlight frame over the link */
.marked::after {
  content: "";
  position: absolute;
  left: -14px;
  top: -4px;
  width: 121px;
  height: 23px;
  border: 3px solid #fb3a3a;
}

.listing {
  padding: 6px 0 9px 25px;
  line-height: 19px;
}

.people {
  display: flex;
  flex-direction: column;
  padding-left: 25px;
  line-height: 19px;
}

.extra .export {
  padding: 2px 21px 0;
  font-weight: 700;
  line-height: 28px;
}

.extra .bookmark {
  padding-bottom: 12px;
}

.bookmark-icons {
  display: flex;
  gap: 3px;
  margin-top: 7px;
}

/* arXivLabs */
.labs {
  margin: 0 27px;
}

.labs-tabs {
  display: flex;
  gap: 4px;
}

.labs-tabs button {
  height: 41px;
  padding: 0 24px;
  border-radius: 8px 8px 0 0;
  background: #ecf4f8;
  color: #4a4a4a;
  font-size: 15px;
  font-weight: 700;
}

.labs-tabs .current {
  height: 42px;
  margin-bottom: -1px;
  border: 1px solid #808080;
  border-bottom: none;
  background: #fff;
  color: #000;
}

.labs-panel {
  display: flex;
  justify-content: space-between;
  height: 400px;
  padding: 47px 92px 0 35px;
  border: 1px solid #808080;
}

.labs-panel h2 {
  font-size: 22px;
  font-weight: 400;
  line-height: 28px;
}

.flask {
  width: 45px;
  height: 80px;
  margin-top: 5px;
  border: 5px solid #000;
}

/* scrollbar */
.scrollbar {
  flex: none;
  width: 20px;
  display: flex;
  flex-direction: column;
  align-items: center;
  padding: 6px 0 4px;
  background: #fcfcfc;
  border-right: 1px solid #b9b9b9;
}

.track {
  flex: 1;
  margin: 7px 0;
}

.thumb {
  width: 11px;
  height: 62%;
  border-radius: 6px;
  background: #8b8b8b;
}

/* browser sidebar */
.sidebar {
  flex: none;
  width: 67px;
  display: flex;
  flex-direction: column;
  align-items: center;
  padding: 2px 0 14px;
  background: #f7f7f7;
}

.sidebar button {
  flex: none;
  width: 50px;
  height: 50px;
  display: flex;
  align-items: center;
  justify-content: center;
}

.sidebar hr {
  width: 35px;
  height: 1px;
  margin: 15px 0;
  border: none;
  background: #c4c4c4;
}

.sidebar .grow {
  flex: 1;
}

.sidebar .add {
  height: 46px;
}

.sidebar .foot {
  height: 26px;
}

/* floating widgets */
.quark {
  position: absolute;
  top: 263px;
  right: 17px;
  width: 153px;
  height: 43px;
  display: flex;
  border-radius: 12px;
  overflow: hidden;
  background: #e6edff;
  box-shadow: 0 0 4px rgba(90, 140, 255, 0.4);
}

.quark-icon {
  width: 50px;
  display: flex;
  align-items: center;
  justify-content: center;
  background: radial-gradient(circle at 0 100%, #0aa0ff, #0d53ff 60%);
}

.quark-label {
  flex: 1;
  color: #0d53ff;
  font-family: "Noto Sans CJK SC", sans-serif;
  font-size: 17px;
  font-weight: 700;
  line-height: 41px;
  text-align: center;
}

.capsule {
  position: absolute;
  top: 364px;
  right: -1px;
  width: 12px;
  height: 64px;
  padding: 15px 1px 0;
  border: 2px solid #808080;
  border-radius: 6px;
  background: #fff;
}

.capsule-fill {
  height: 100%;
  border-radius: 3px;
  background: linear-gradient(#ffc48a, #ff8a3c);
}

.watermark {
  position: absolute;
  right: 15px;
  bottom: 4px;
  color: rgba(110, 110, 110, 0.75);
  font-family: "Liberation Sans", "Noto Sans CJK SC", sans-serif;
  font-size: 14px;
  line-height: 24px;
}
```
